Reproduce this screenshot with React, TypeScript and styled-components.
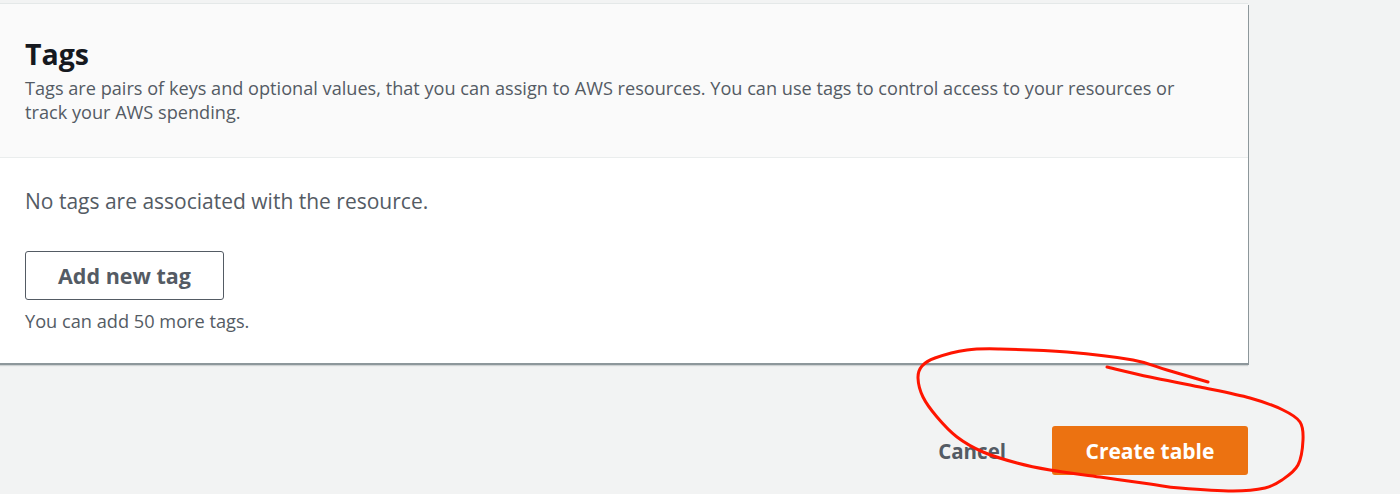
import styled, { createGlobalStyle } from 'styled-components';

const GlobalStyle = createGlobalStyle`
  html, body {
    margin: 0;
    padding: 0;
    background: #f2f3f3;
  }
  body {
    font-family: "Open Sans", "Noto Sans", Arial, sans-serif;
    color: #545b64;
  }
`;

// red hand-drawn loop around the footer buttons
const loopPoints: [number, number][] = [
  [1107, 367], [1150, 377], [1200, 387], [1250, 398], [1283, 410],
  [1300, 422], [1303, 440], [1298, 465], [1282, 480], [1265, 488],
  [1233, 491], [1180, 488], [1150, 484], [1100, 477], [1050, 470],
  [1017, 463], [983, 452], [957, 437], [937, 417], [923, 397],
  [918, 378], [922, 366], [935, 358], [967, 350], [1000, 349],
  [1067, 352], [1133, 360], [1167, 370], [1208, 382],
];

const smoothPath = (pts: [number, number][]) => {
  let d = `M${pts[0][0]},${pts[0][1]}`;
  for (let i = 0; i < pts.length - 1; i++) {
    const p0 = pts[i - 1] || pts[i];
    const p1 = pts[i];
    const p2 = pts[i + 1];
    const p3 = pts[i + 2] || p2;
    const c1x = p1[0] + (p2[0] - p0[0]) / 6;
    const c1y = p1[1] + (p2[1] - p0[1]) / 6;
    const c2x = p2[0] - (p3[0] - p1[0]) / 6;
    const c2y = p2[1] - (p3[1] - p1[1]) / 6;
    d += ` C${c1x},${c1y} ${c2x},${c2y} ${p2[0]},${p2[1]}`;
  }
  return d;
};

const App = () => {
  return (
    <Page>
      <GlobalStyle />
      <Card>
        <CardHeader>
          <Title>Tags</Title>
          <Description>
            Tags are pairs of keys and optional values, that you can assign to AWS resources. You
            can use tags to control access to your resources or track your AWS spending.
          </Description>
        </CardHeader>
        <CardBody>
          <EmptyText>No tags are associated with the resource.</EmptyText>
          <OutlineButton>Add new tag</OutlineButton>
          <Hint>You can add 50 more tags.</Hint>
        </CardBody>
      </Card>
      <Footer>
        <LinkButton>Cancel</LinkButton>
        <PrimaryButton>Create table</PrimaryButton>
      </Footer>
      <Annotation viewBox="0 0 1400 494" width="1400" height="494">
        <path
          d={smoothPath(loopPoints)}
          fill="none"
          stroke="#ff1500"
          strokeWidth={3}
          strokeLinecap="round"
          strokeLinejoin="round"
        />
      </Annotation>
    </Page>
  );
};

export default App;

const Page = styled.div`
  position: relative;
  width: 1400px;
  height: 494px;
  overflow: hidden;
  padding-top: 3px;
  box-sizing: border-box;
`;

const Card = styled.section`
  width: 1249px;
  margin-left: -1px;
  background: #ffffff;
  border-top: 1px solid #e4e8e8;
  box-shadow: 1px 2px 0 0 #8d979b, 0 3px 1px 0 rgba(0, 28, 36, 0.15);
`;

const CardHeader = styled.header`
  background: #fafafa;
  border-bottom: 1px solid #eaeded;
  padding: 32px 26px 33px 26px;
`;

const Title = styled.h2`
  margin: 0;
  font-size: 28.5px;
  line-height: 36px;
  font-weight: 700;
  color: #16191f;
`;

const Description = styled.p`
  max-width: 1185px;
  margin: 4px 0 0;
  font-size: 18.15px;
  line-height: 24px;
  color: #545b64;
`;

const CardBody = styled.div`
  padding: 28px 26px 30px;
`;

const EmptyText = styled.p`
  margin: 0;
  font-size: 21px;
  line-height: 30px;
  color: #545b64;
`;

const OutlineButton = styled.button`
  display: block;
  margin-top: 35px;
  width: 199px;
  height: 49px;
  border: 1px solid #545b64;
  border-radius: 3px;
  background: #ffffff;
  color: #545b64;
  font-family: inherit;
  font-size: 21.5px;
  font-weight: 700;
  cursor: pointer;
`;

const Hint = styled.p`
  margin: 9px 0 0;
  font-size: 18.2px;
  line-height: 24px;
  color: #545b64;
`;

const Footer = styled.div`
  display: flex;
  justify-content: flex-end;
  align-items: center;
  gap: 46px;
  width: 1248px;
  margin-top: 63px;
`;

const LinkButton = styled.button`
  border: none;
  background: none;
  padding: 0;
  color: #545b64;
  font-family: inherit;
  font-size: 20.5px;
  font-weight: 700;
  cursor: pointer;
`;

const PrimaryButton = styled.button`
  width: 196px;
  height: 49px;
  border: none;
  border-radius: 3px;
  background: #ec7211;
  color: #ffffff;
  font-family: inherit;
  font-size: 21px;
  font-weight: 700;
  cursor: pointer;
`;

const Annotation = styled.svg`
  position: absolute;
  top: 0;
  left: 0;
  pointer-events: none;
`;
